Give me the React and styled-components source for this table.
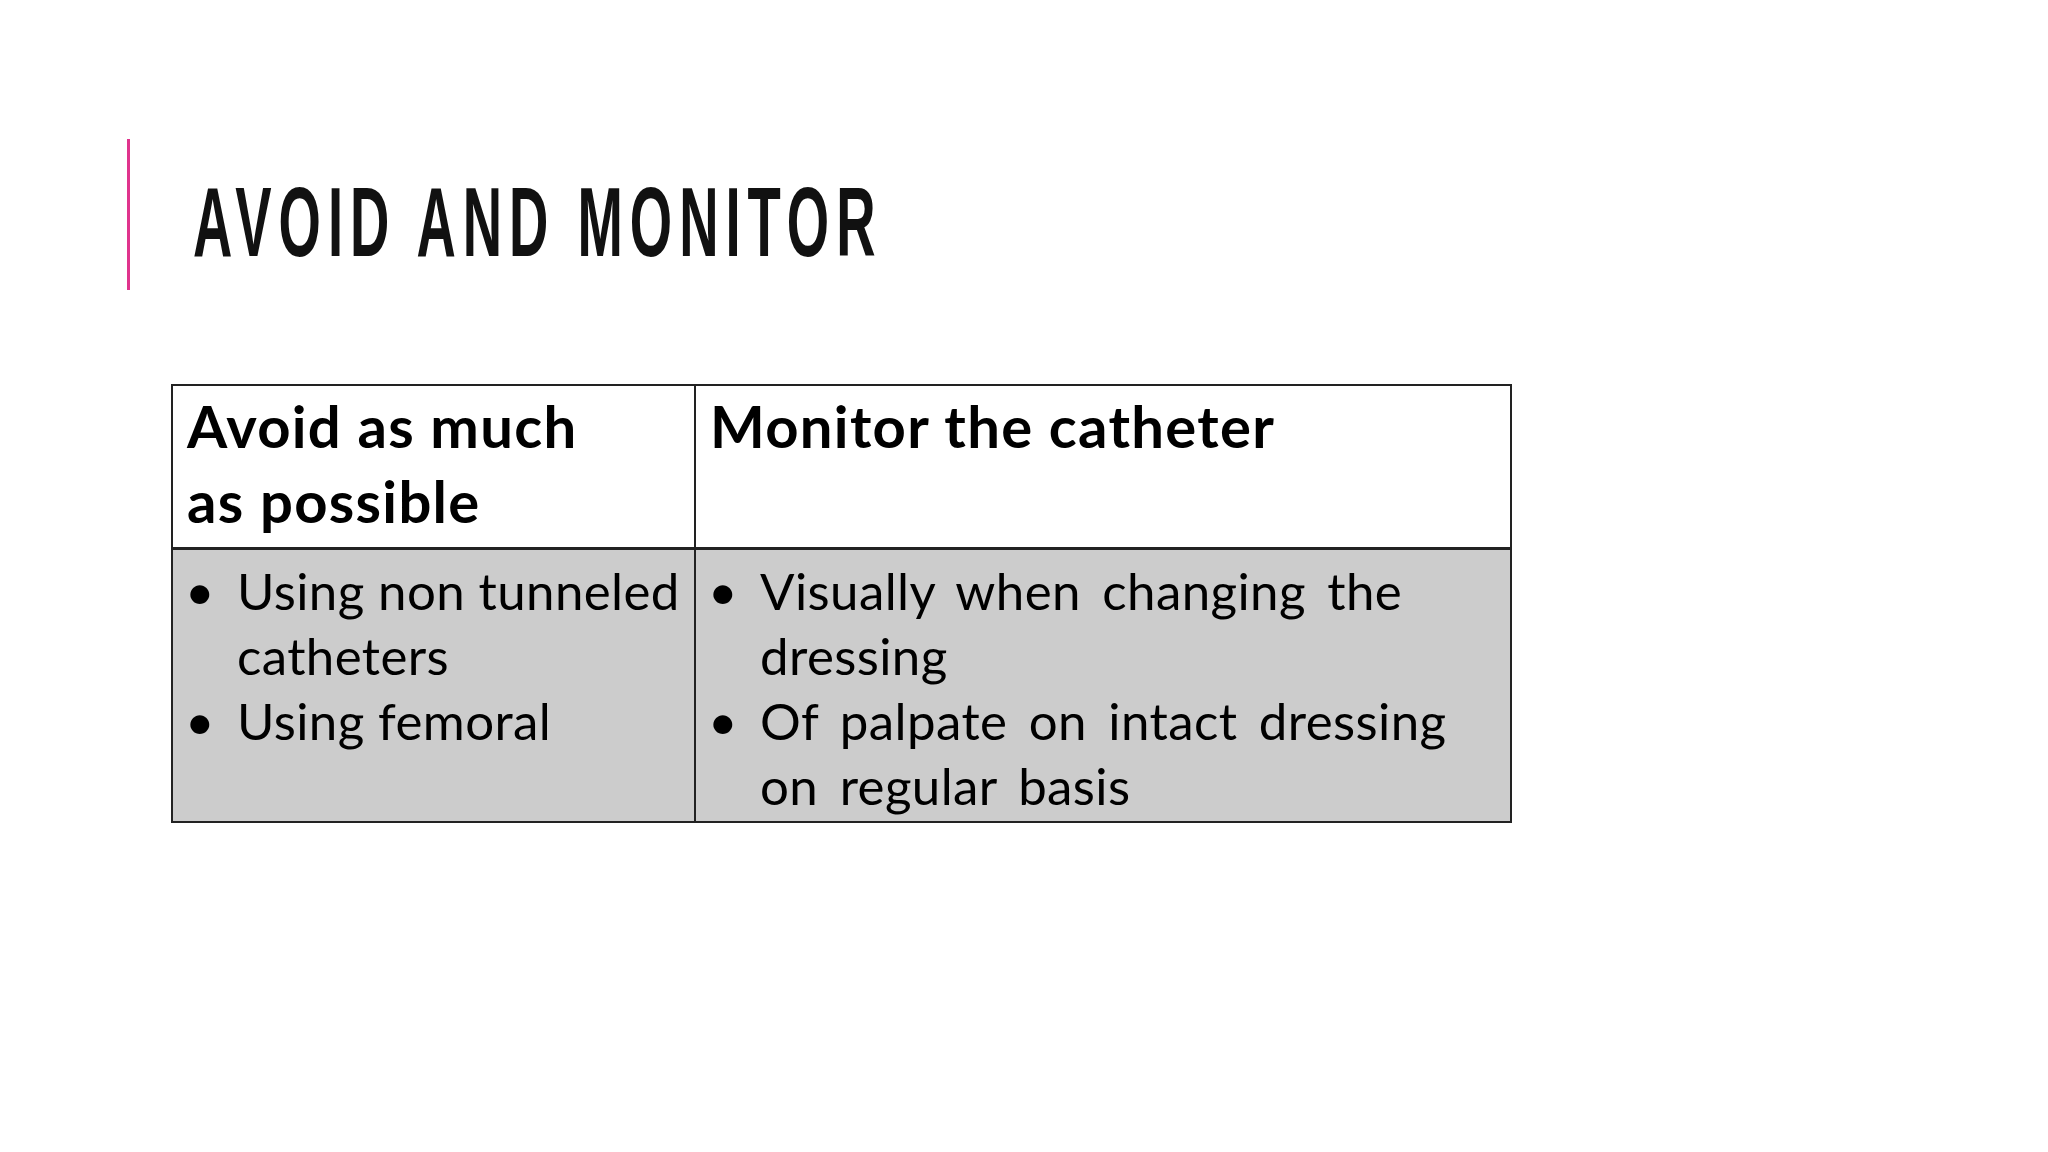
import React from "react";
import styled, { createGlobalStyle } from "styled-components";

const Global = createGlobalStyle`
  html, body { margin: 0; padding: 0; background: #ffffff; }
  body { font-family: "Lato", "Liberation Sans", sans-serif; color: #000; }
`;

const Slide = styled.div`
  width: 2048px;
  height: 1152px;
  box-sizing: border-box;
  padding: 139px 0 0 127px;
  background: #ffffff;
  overflow: hidden;
`;

const TitleRow = styled.div`
  display: flex;
  align-items: center;
  height: 151px;
`;

const AccentBar = styled.div`
  width: 3px;
  height: 100%;
  background: #e0348d;
  flex: none;
`;

const Title = styled.h1`
  margin: 14px 0 0 63px;
  font-family: "Liberation Sans", sans-serif;
  font-weight: 700;
  font-size: 99px;
  line-height: 1;
  letter-spacing: 12.7px;
  color: #111;
  transform: scaleX(0.55);
  transform-origin: left center;
  white-space: nowrap;
`;

const Table = styled.div`
  display: grid;
  grid-template-columns: 523px 814px;
  grid-template-rows: 164px 271px;
  margin: 94px 0 0 44px;
  width: max-content;
  border: 2px solid #222;
`;

const Cell = styled.div`
  box-sizing: border-box;
  padding: ${(p) => (p.$head ? "2px 8px 0 14px" : "8px 2px 0 20px")};
  background: ${(p) => (p.$head ? "#ffffff" : "#cccccc")};
  border-right: ${(p) => (p.$last ? "none" : "2px solid #222")};
  border-bottom: ${(p) => (p.$head ? "3px solid #222" : "none")};
`;

const HeadText = styled.div`
  font-family: "Lato", "Liberation Sans", sans-serif;
  font-weight: 700;
  font-size: 58px;
  line-height: 75px;
  letter-spacing: 1.3px;
`;

const List = styled.ul`
  margin: 0;
  padding: 0;
  list-style: none;
  letter-spacing: 0.4px;
  word-spacing: ${(p) => (p.$spaced ? "8px" : "0")};
`;

const Item = styled.li`
  position: relative;
  padding-left: 44px;
  font-family: "Lato", "Liberation Sans", sans-serif;
  font-weight: 400;
  font-size: 51px;
  line-height: 65px;
  &::before {
    content: "•";
    position: absolute;
    left: -8px;
    top: 0;
  }
`;

export default function App() {
  return (
    <>
      <Global />
      <Slide>
        <TitleRow>
          <AccentBar />
          <Title>AVOID AND MONITOR</Title>
        </TitleRow>
        <Table>
          <Cell $head>
            <HeadText>
              Avoid as much
              <br />
              as possible
            </HeadText>
          </Cell>
          <Cell $head $last>
            <HeadText>Monitor the catheter</HeadText>
          </Cell>
          <Cell>
            <List>
              <Item>Using non tunneled catheters</Item>
              <Item>Using femoral</Item>
            </List>
          </Cell>
          <Cell $last>
            <List $spaced>
              <Item>Visually when changing the dressing</Item>
              <Item>Of palpate on intact dressing on regular basis</Item>
            </List>
          </Cell>
        </Table>
      </Slide>
    </>
  );
}
